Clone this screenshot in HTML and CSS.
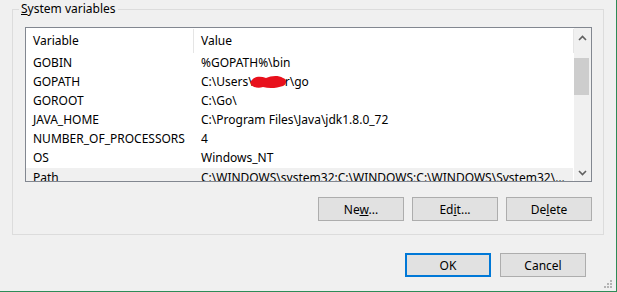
FILE: index.html
```html
<!DOCTYPE html>
<html lang="en">
<head>
    <meta charset="UTF-8">
    <title>Environment Variables</title>
    <link rel="stylesheet" href="styles.css">
</head>
<body>
    <div class="window">
        <fieldset class="group">
            <legend><u>S</u>ystem variables</legend>

            <div class="listbox">
                <div class="list">
                    <div class="list-head">
                        <div class="cell col-name">Variable</div>
                        <div class="cell col-value">Value</div>
                    </div>
                    <div class="row">
                        <div class="cell col-name">GOBIN</div>
                        <div class="cell col-value">%GOPATH%\bin</div>
                    </div>
                    <div class="row">
                        <div class="cell col-name">GOPATH</div>
                        <div class="cell col-value">C:\Users\<svg class="redact" width="38" height="16" viewBox="0 0 38 16"><path d="M2 6 C5 2 11 2 16 4 C21 2 28 1 33 4 C37 5 37 10 33 12 C27 14 20 15 13 13 C8 15 2 13 1 10 C0 8 1 7 2 6 Z" fill="#e8101c"/></svg>r\go</div>
                    </div>
                    <div class="row">
                        <div class="cell col-name">GOROOT</div>
                        <div class="cell col-value">C:\Go\</div>
                    </div>
                    <div class="row">
                        <div class="cell col-name">JAVA_HOME</div>
                        <div class="cell col-value">C:\Program Files\Java\jdk1.8.0_72</div>
                    </div>
                    <div class="row">
                        <div class="cell col-name">NUMBER_OF_PROCESSORS</div>
                        <div class="cell col-value">4</div>
                    </div>
                    <div class="row">
                        <div class="cell col-name">OS</div>
                        <div class="cell col-value">Windows_NT</div>
                    </div>
                    <div class="row row-hover">
                        <div class="cell col-name">Path</div>
                        <div class="cell col-value">C:\WINDOWS\system32;C:\WINDOWS;C:\WINDOWS\System32\Wbem;C:\WINDOWS\System32\WindowsPowerShell\v1.0\</div>
                    </div>
                </div>

                <div class="scrollbar">
                    <div class="arrow">
                        <svg width="9" height="6" viewBox="0 0 9 6"><path d="M1 5 L4.5 1.5 L8 5" fill="none" stroke="#606060" stroke-width="1.6"/></svg>
                    </div>
                    <div class="track">
                        <div class="thumb"></div>
                    </div>
                    <div class="arrow">
                        <svg width="9" height="6" viewBox="0 0 9 6"><path d="M1 1 L4.5 4.5 L8 1" fill="none" stroke="#606060" stroke-width="1.6"/></svg>
                    </div>
                </div>
            </div>

            <div class="button-row">
                <button class="btn">Ne<u>w</u>...</button>
                <button class="btn">Ed<u>i</u>t...</button>
                <button class="btn">De<u>l</u>ete</button>
            </div>
        </fieldset>

        <div class="dialog-buttons">
            <button class="btn btn-default">OK</button>
            <button class="btn">Cancel</button>
        </div>

        <svg class="grip" width="10" height="10" viewBox="0 0 10 10">
            <rect x="7" y="0" width="2" height="2" fill="#b4b4b4"/>
            <rect x="4" y="3" width="2" height="2" fill="#b4b4b4"/>
            <rect x="7" y="3" width="2" height="2" fill="#b4b4b4"/>
            <rect x="1" y="6" width="2" height="2" fill="#b4b4b4"/>
            <rect x="4" y="6" width="2" height="2" fill="#b4b4b4"/>
            <rect x="7" y="6" width="2" height="2" fill="#b4b4b4"/>
        </svg>
    </div>
</body>
</html>
```

FILE: styles.css
```css
* {
    margin: 0;
    padding: 0;
    box-sizing: border-box;
}

body {
    font-family: 'Noto Sans', 'Open Sans', sans-serif;
    font-size: 12px;
    color: #000;
    background: #f0f0f0;
}

.window {
    position: relative;
    width: 617px;
    height: 292px;
    border-right: 1px solid #2e8b57;
    border-bottom: 1px solid #2e8b57;
    padding-top: 1px;
}

.group {
    width: 592px;
    min-width: 0;
    margin-left: 12px;
    border: 1px solid #dcdcdc;
    padding: 10px 11px 13px 12px;
}

.group legend {
    margin-left: -6px;
    padding: 0 2px;
    line-height: 16px;
}

.listbox {
    display: flex;
    height: 155px;
    border: 1px solid #828790;
    background: white;
    overflow: hidden;
}

.list {
    flex: 1;
    min-width: 0;
}

.list-head, .row {
    display: flex;
    white-space: nowrap;
}

.list-head {
    height: 24px;
    line-height: 24px;
    border-right: 1px solid #e5e5e5;
    margin-top: 1px;
}

.list-head .col-name {
    border-right: 1px solid #e5e5e5;
}

.row {
    height: 19px;
    line-height: 19px;
}

.row-hover {
    background: #f0f0f0;
    margin-top: 1px;
    margin-right: 1px;
}

.cell {
    padding-left: 7px;
    overflow: hidden;
    text-overflow: ellipsis;
}

.col-name {
    width: 168px;
    flex: none;
}

.col-value {
    flex: 1;
    min-width: 0;
    padding-right: 6px;
}

.redact {
    vertical-align: -4px;
    margin-left: -3px;
    margin-right: -3px;
}

.scrollbar {
    width: 17px;
    flex: none;
    display: flex;
    flex-direction: column;
    background: #f0f0f0;
}

.arrow {
    height: 17px;
    display: flex;
    align-items: center;
    justify-content: center;
}

.arrow:first-child {
    padding-top: 3px;
}

.track {
    flex: 1;
    padding-top: 13px;
}

.thumb {
    width: 15px;
    height: 37px;
    background: #cdcdcd;
}

.button-row, .dialog-buttons {
    display: flex;
    justify-content: flex-end;
    gap: 8px;
}

.button-row {
    margin-top: 15px;
}

.dialog-buttons {
    gap: 9px;
    margin-top: 18px;
    padding-right: 30px;
}

.btn {
    width: 86px;
    height: 24px;
    font-family: inherit;
    font-size: 12px;
    color: #000;
    background: #e1e1e1;
    border: 1px solid #adadad;
}

.btn-default {
    border: 2px solid #0078d7;
}

.grip {
    position: absolute;
    right: 3px;
    bottom: 1px;
}
```
